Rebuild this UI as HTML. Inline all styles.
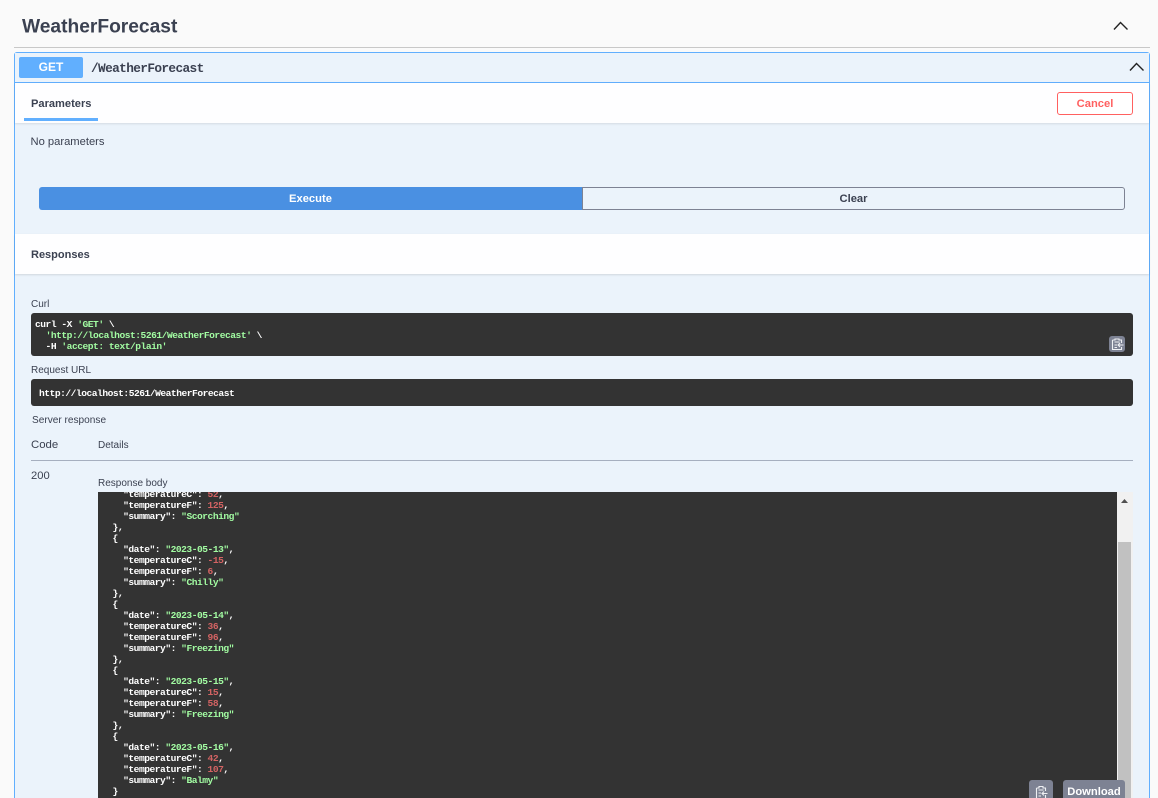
<!DOCTYPE html>
<html><head><meta charset="utf-8">
<style>
html,body{margin:0;padding:0;width:1158px;height:798px;overflow:hidden;background:#fafafa;font-family:"Liberation Sans",sans-serif;color:#3b4151}
div,pre,span.a,svg{position:absolute}
#root{left:0;top:0;width:1158px;height:798px;overflow:hidden;background:#fafafa}
.t{white-space:nowrap;line-height:14px}
pre{margin:0;font-family:"Liberation Mono",monospace;font-size:9.6px;letter-spacing:-.48px;line-height:11px;font-weight:bold;color:#fff;white-space:pre}
.s{color:#a2fca2}.n{color:#d36363}
</style></head><body>
<div id="root">
<div class="t" style="left:22px;top:16px;font-size:19.2px;font-weight:bold;line-height:22px;transform:translateY(.5px)">WeatherForecast</div>
<svg style="left:1113px;top:20px" width="16" height="11" viewBox="0 0 16 11"><path d="M1 9.5 L7.5 2.5 L14.5 9.5" fill="none" stroke="#222" stroke-width="1.4"/></svg>
<div style="left:14px;top:47px;width:1136px;height:1px;background:#c8c8c8"></div>

<div style="left:14px;top:52px;width:1134px;height:760px;border:1px solid #61affe;border-radius:3px;background:#ebf3fb"></div>
<div style="left:15px;top:53px;width:1134px;height:29px;background:#ebf3fb;border-bottom:1px solid #61affe"></div>
<div class="t" style="left:19px;top:57px;width:64px;height:21px;background:#61affe;border-radius:2px;color:#fff;font-weight:bold;font-size:12px;line-height:21px;text-align:center">GET</div>
<pre style="left:91px;top:62px;font-size:12.8px;letter-spacing:-.64px;line-height:14px;color:#3b4151">/WeatherForecast</pre>
<svg style="left:1129px;top:61px" width="16" height="11" viewBox="0 0 16 11"><path d="M1 9.5 L7.5 2.5 L14.5 9.5" fill="none" stroke="#222" stroke-width="1.4"/></svg>

<div style="left:15px;top:83px;width:1134px;height:40px;background:#fefeff;box-shadow:0 1px 2px rgba(0,0,0,.1)"></div>
<div class="t" style="left:31px;top:97px;font-size:11.1px;font-weight:bold">Parameters</div>
<div style="left:24px;top:118px;width:74px;height:3px;background:#61affe"></div>
<div class="t" style="left:1057px;top:92px;width:74px;height:21px;border:1px solid #ff6060;border-radius:3px;background:#fff;color:#ff6060;font-weight:bold;font-size:11.2px;line-height:23px;text-align:center">Cancel</div>
<div class="t" style="left:30.5px;top:135px;font-size:11.2px">No parameters</div>

<div class="t" style="left:39px;top:187px;width:543px;height:23px;background:#4a90e2;border-radius:3px 0 0 3px;color:#fff;font-weight:bold;font-size:11.2px;line-height:25px;text-align:center">Execute</div>
<div class="t" style="left:582px;top:187px;width:541px;height:21px;border:1px solid #7d8293;border-radius:0 3px 3px 0;background:#ebf3fb;font-weight:bold;font-size:11.2px;line-height:23px;text-align:center">Clear</div>

<div style="left:15px;top:234px;width:1134px;height:40px;background:#fefeff;box-shadow:0 1px 2px rgba(0,0,0,.12)"></div>
<div class="t" style="left:31px;top:248px;font-size:11px;font-weight:bold">Responses</div>

<div class="t" style="left:31px;top:298px;font-size:10px">Curl</div>
<div style="left:31px;top:313px;width:1102px;height:43px;background:#333;border-radius:3px"></div>
<pre style="left:35px;top:319px">curl -X <span class="s">'GET'</span> \
  <span class="s">'http://localhost:5261/WeatherForecast'</span> \
  -H <span class="s">'accept: text/plain'</span></pre>
<div style="left:1109px;top:336px;width:16px;height:16px;background:#7d8293;border-radius:3px"></div>
<svg style="left:1109px;top:336px" width="16" height="16" viewBox="0 0 16 16"><path d="M3.5 4 H6 V3 H10 V4 H12.5 V7 M12.5 11 V13.5 H3.5 V4 M5.5 6 H10.5 M5.5 9 H8 M5.5 11.5 H8 M14.5 9 H9 M11 7 L9 9 L11 11" fill="none" stroke="#eef0f3" stroke-width="1.1"/></svg>

<div class="t" style="left:31px;top:364px;font-size:10px">Request URL</div>
<div style="left:31px;top:379px;width:1102px;height:27px;background:#333;border-radius:3px"></div>
<pre style="left:39px;top:388px">http://localhost:5261/WeatherForecast</pre>

<div class="t" style="left:32px;top:414px;font-size:10.1px">Server response</div>
<div class="t" style="left:31px;top:438px;font-size:11.4px">Code</div>
<div class="t" style="left:98px;top:439px;font-size:10px">Details</div>
<div style="left:31px;top:460px;width:1102px;height:1px;background:#a6afbf"></div>
<div class="t" style="left:31px;top:469px;font-size:11.2px">200</div>
<div class="t" style="left:98px;top:477px;font-size:10px">Response body</div>

<div style="left:98px;top:492px;width:1035px;height:306px;overflow:hidden">
<div style="left:0;top:0;width:1019px;height:306px;background:#333"></div>
<pre style="left:4px;top:-3px">    "temperatureC": <span class="n">52</span>,
    "temperatureF": <span class="n">125</span>,
    "summary": <span class="s">"Scorching"</span>
  },
  {
    "date": <span class="s">"2023-05-13"</span>,
    "temperatureC": <span class="n">-15</span>,
    "temperatureF": <span class="n">6</span>,
    "summary": <span class="s">"Chilly"</span>
  },
  {
    "date": <span class="s">"2023-05-14"</span>,
    "temperatureC": <span class="n">36</span>,
    "temperatureF": <span class="n">96</span>,
    "summary": <span class="s">"Freezing"</span>
  },
  {
    "date": <span class="s">"2023-05-15"</span>,
    "temperatureC": <span class="n">15</span>,
    "temperatureF": <span class="n">58</span>,
    "summary": <span class="s">"Freezing"</span>
  },
  {
    "date": <span class="s">"2023-05-16"</span>,
    "temperatureC": <span class="n">42</span>,
    "temperatureF": <span class="n">107</span>,
    "summary": <span class="s">"Balmy"</span>
  }
]</pre>
<div style="left:1019px;top:0;width:16px;height:306px;background:#f1f1f1"></div>
<div style="left:1020px;top:50px;width:13px;height:256px;background:#c1c1c1"></div>
<svg style="left:1022px;top:6px" width="9" height="6" viewBox="0 0 9 6"><path d="M4.5 1 L8 5 H1 Z" fill="#505050"/></svg>
</div>

<div style="left:1029px;top:780px;width:24px;height:24px;background:#7d8293;border-radius:3px"></div>
<svg style="left:1033px;top:785px" width="16" height="16" viewBox="0 0 16 16"><path d="M3.5 3 H6 V1.5 H10 V3 H12.5 V6 M12.5 10 V14 H3.5 V3 M5.5 5 H10.5 M5.5 8 H8 M5.5 11 H8 M14.5 8.5 H9 M11 6.5 L9 8.5 L11 10.5" fill="none" stroke="#eef0f3" stroke-width="1.1"/></svg>
<div class="t" style="left:1063px;top:780px;width:62px;height:24px;background:#7d8293;border-radius:3px;color:#fff;font-weight:bold;font-size:11.2px;line-height:25px;text-align:center">Download</div>
</div>
</body></html>
